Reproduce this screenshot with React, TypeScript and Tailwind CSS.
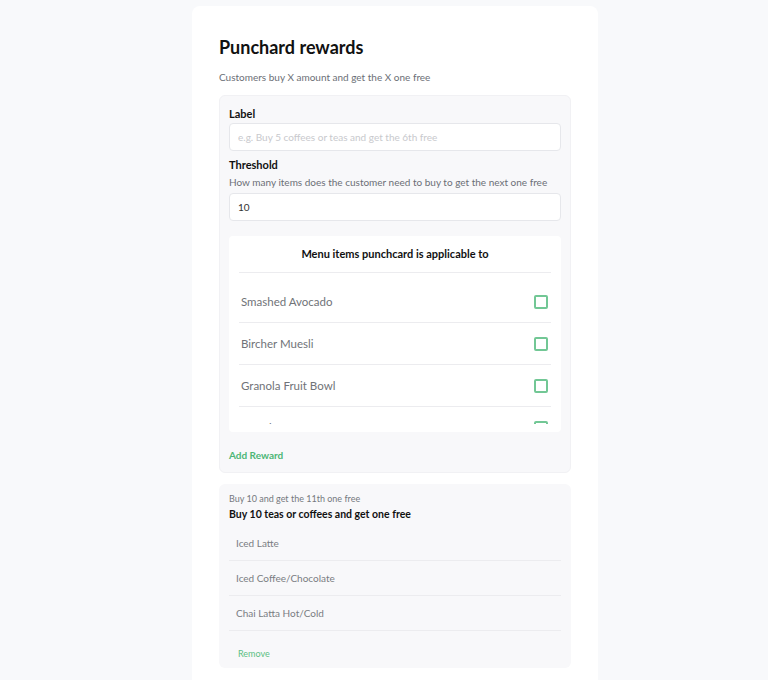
import React from "react";

const menuItems = ["Smashed Avocado", "Bircher Muesli", "Granola Fruit Bowl", "French Toast"];
const rewardItems = ["Iced Latte", "Iced Coffee/Chocolate", "Chai Latta Hot/Cold"];

export default function App() {
  return (
    <div className="flex min-h-screen justify-center bg-[#f8f9fb] pt-[6px] pl-[22px] font-['Lato','Liberation_Sans',sans-serif]">
      <div className="w-[406px] rounded-lg bg-white px-[27px] pt-[30px] pb-6">
        <h1 className="text-[18px] leading-[22px] font-bold text-[#111]">Punchard rewards</h1>
        <p className="mt-[12px] text-[10px] leading-[14px] text-[#6b6f76]">
          Customers buy X amount and get the X one free
        </p>

        <div className="mt-[11px] rounded-md border border-[#f1f1f4] bg-[#f8f8fa] px-[9px] pt-[11px] pb-[10px]">
          <label className="block text-[11px] leading-[14px] font-bold text-[#111]">Label</label>
          <input
            className="mt-[2px] h-[28px] w-full rounded border border-[#e6e7eb] bg-white px-[8px] text-[10px] text-[#333] outline-none placeholder:text-[#c8c9cd]"
            placeholder="e.g. Buy 5 coffees or teas and get the 6th free"
          />

          <label className="mt-[7px] block text-[11px] leading-[14px] font-bold text-[#111]">Threshold</label>
          <p className="mt-[3px] text-[10px] leading-[14px] text-[#6b6f76]">
            How many items does the customer need to buy to get the next one free
          </p>
          <input
            className="mt-[4px] h-[28px] w-full rounded border border-[#e6e7eb] bg-white px-[8px] text-[10px] text-[#333] outline-none"
            defaultValue="10"
          />

          <div className="mt-[15px] rounded bg-white px-[10px] pb-[8px]">
            <div className="border-b border-[#ececef] pt-[11px] pb-[11px] text-center text-[11px] leading-[14px] font-bold text-[#111]">
              Menu items punchcard is applicable to
            </div>
            <div className="h-[151px] overflow-hidden pt-[8px]">
              {menuItems.map((item) => (
                <div
                  key={item}
                  className="flex h-[42px] items-center justify-between border-b border-[#ececef] pr-[3px] pl-[2px]"
                >
                  <span className="text-[11.5px] text-[#707378]">{item}</span>
                  <span className="h-[14px] w-[14px] rounded-[2px] border-2 border-[#72c795]" />
                </div>
              ))}
            </div>
          </div>

          <button className="mt-[16px] block text-[10px] leading-[14px] font-bold text-[#4db676]">Add Reward</button>
        </div>

        <div className="mt-[11px] rounded-md bg-[#f8f8fa] px-[10px] pt-[9px] pb-[8px]">
          <p className="text-[9px] leading-[12px] text-[#75787e]">Buy 10 and get the 11th one free</p>
          <p className="mt-[2px] text-[10.5px] leading-[14px] font-bold text-[#111]">
            Buy 10 teas or coffees and get one free
          </p>
          <div className="mt-[5px]">
            {rewardItems.map((item) => (
              <div key={item} className="flex h-[35px] items-center border-b border-[#ececef] px-[7px]">
                <span className="text-[10px] text-[#7a7d82]">{item}</span>
              </div>
            ))}
          </div>
          <button className="mt-[17px] ml-[9px] block text-[9px] leading-[12px] text-[#5cbf83]">Remove</button>
        </div>
      </div>
    </div>
  );
}
